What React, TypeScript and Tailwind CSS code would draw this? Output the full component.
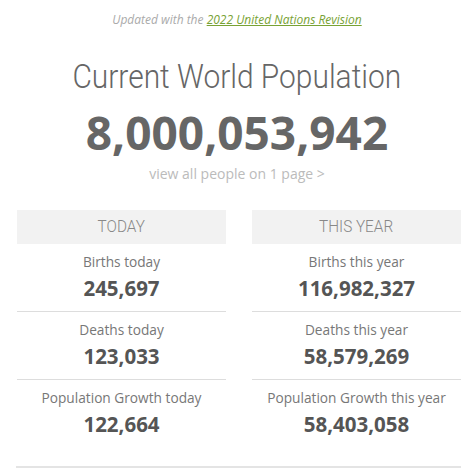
const today = [
  { label: 'Births today', value: '245,697' },
  { label: 'Deaths today', value: '123,033' },
  { label: 'Population Growth today', value: '122,664' },
]

const thisYear = [
  { label: 'Births this year', value: '116,982,327' },
  { label: 'Deaths this year', value: '58,579,269' },
  { label: 'Population Growth this year', value: '58,403,058' },
]

function StatColumn({ title, rows }: { title: string; rows: { label: string; value: string }[] }) {
  return (
    <div className="flex-1">
      <div className="h-[34px] bg-[#f2f2f2] flex items-center justify-center">
        <span className="inline-block scale-x-[0.9] text-[17px] font-light text-[#888] font-['Roboto',sans-serif]">{title}</span>
      </div>
      {rows.map((r, i) => (
        <div key={r.label} className={`flex flex-col items-center pt-[8px] pb-[9px] ${i < rows.length - 1 ? 'border-b border-[#ddd]' : ''}`}>
          <div className="text-[13.7px] leading-[20px] text-[#777]">{r.label}</div>
          <div className="mt-[2px] text-[20.5px] leading-[28px] font-bold text-[#555]">{r.value}</div>
        </div>
      ))}
    </div>
  )
}

export default function App() {
  return (
    <div className="w-[474px] h-[470px] overflow-hidden bg-white font-['Open_Sans',sans-serif]">
      <div className="pt-[12px] text-center text-[12px] leading-[16px] italic text-[#aaa]">
        Updated with the{' '}
        <a href="#" className="text-[#78a234] underline">2022 United Nations Revision</a>
      </div>
      <h1 className="mt-[28px] text-center text-[34px] leading-[40px] font-light text-[#666] font-['Roboto',sans-serif]">
        <span className="inline-block scale-x-[0.88]">Current World Population</span>
      </h1>
      <div className="mt-[8px] text-center font-bold text-[46px] leading-[56px] text-[#666]">8,000,053,942</div>
      <div className="mt-[4px] text-center text-[14px] leading-[20px] text-[#bbb]">view all people on 1 page &gt;</div>
      <div className="mt-[26px] ml-[17px] mr-[13px] flex gap-[26px]">
        <StatColumn title="TODAY" rows={today} />
        <StatColumn title="THIS YEAR" rows={thisYear} />
      </div>
      <div className="mt-[19px] ml-[16px] mr-[13px] border-t-2 border-[#e4e4e4] h-[10px]" />
    </div>
  )
}
